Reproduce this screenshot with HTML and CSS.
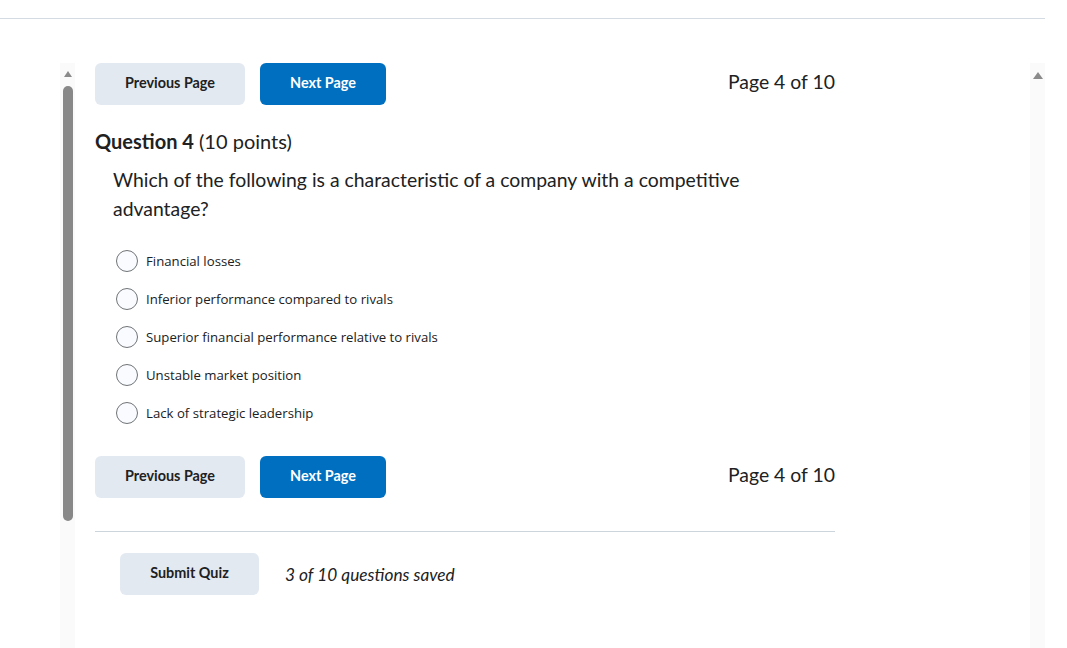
FILE: index.html
```html
<!DOCTYPE html>
<html lang="en">
<head>
    <meta charset="UTF-8">
    <title>Quiz - Page 4</title>
    <link rel="stylesheet" href="styles.css">
</head>
<body>

<div class="top-line"></div>

<div class="frame">
    <div class="scroll-track left">
        <span class="scroll-arrow"></span>
        <span class="scroll-thumb"></span>
    </div>

    <main class="quiz">
        <div class="pager">
            <button class="btn btn-light">Previous Page</button>
            <button class="btn btn-primary">Next Page</button>
            <span class="page-count">Page 4 of 10</span>
        </div>

        <h2 class="question-title"><strong>Question 4</strong> (10 points)</h2>

        <p class="question-text">Which of the following is a characteristic of a company with a competitive advantage?</p>

        <div class="options">
            <label class="option"><span class="radio"></span>Financial losses</label>
            <label class="option"><span class="radio"></span>Inferior performance compared to rivals</label>
            <label class="option"><span class="radio"></span>Superior financial performance relative to rivals</label>
            <label class="option"><span class="radio"></span>Unstable market position</label>
            <label class="option"><span class="radio"></span>Lack of strategic leadership</label>
        </div>

        <div class="pager pager-bottom">
            <button class="btn btn-light">Previous Page</button>
            <button class="btn btn-primary">Next Page</button>
            <span class="page-count">Page 4 of 10</span>
        </div>

        <hr class="divider">

        <div class="submit-row">
            <button class="btn btn-light btn-submit">Submit Quiz</button>
            <span class="saved">3 of 10 questions saved</span>
        </div>
    </main>

    <div class="scroll-track right">
        <span class="scroll-arrow"></span>
    </div>
</div>

</body>
</html>
```

FILE: styles.css
```css
body {
    margin: 0;
    padding: 0;
    background: #ffffff;
    color: #202122;
    font-family: Lato, "Open Sans", sans-serif;
    overflow: hidden;
}
.top-line {
    width: 1045px;
    height: 18px;
    border-bottom: 1px solid #d5dbe3;
}
.frame {
    display: flex;
    margin-top: 44px;
    height: 585px;
}
.scroll-track {
    width: 15px;
    background: #fafafa;
    display: flex;
    flex-direction: column;
    align-items: center;
    padding-top: 8px;
    box-sizing: border-box;
}
.scroll-track.left {
    margin-left: 60px;
}
.scroll-track.right {
    margin-left: 195px;
}
.scroll-arrow {
    width: 0;
    height: 0;
    border-left: 4px solid transparent;
    border-right: 4px solid transparent;
    border-bottom: 6px solid #8a8a8a;
}
.scroll-track.right .scroll-arrow {
    margin-top: 1px;
    border-left-width: 5px;
    border-right-width: 5px;
    border-bottom-width: 7px;
}
.scroll-thumb {
    width: 10px;
    height: 435px;
    margin-top: 9px;
    background: #888888;
    border-radius: 5px;
}
.quiz {
    width: 740px;
    margin-left: 20px;
}
.pager {
    display: flex;
    align-items: center;
    gap: 15px;
}
.btn {
    height: 42px;
    border: none;
    border-radius: 6px;
    font-family: Lato, sans-serif;
    font-size: 14.4px;
    font-weight: 700;
    cursor: pointer;
    padding: 0 0 3px;
}
.btn-light {
    width: 150px;
    background: #e3e9f1;
    color: #202122;
}
.btn-primary {
    width: 126px;
    background: #006fbf;
    color: #ffffff;
}
.page-count {
    margin-left: auto;
    padding-bottom: 5px;
    font-size: 19.4px;
}
.question-title {
    margin: 21px 0 0;
    font-size: 20px;
    line-height: 30px;
    font-weight: 400;
}
.question-title strong {
    font-weight: 700;
}
.question-text {
    margin: 9px 0 0 18px;
    width: 680px;
    font-size: 19.4px;
    line-height: 29px;
}
.options {
    margin-top: 19px;
    padding-left: 21px;
}
.option {
    display: flex;
    align-items: center;
    height: 38px;
    font-family: "Open Sans", sans-serif;
    font-size: 13.2px;
    color: #202122;
}
.radio {
    width: 20px;
    height: 20px;
    border: 1.5px solid #6f7477;
    border-radius: 50%;
    background: #f9fbff;
    margin-right: 8px;
}
.pager-bottom {
    margin-top: 24px;
}
.divider {
    border: none;
    border-top: 1px solid #cdd5dc;
    margin: 33px 0 0;
}
.submit-row {
    display: flex;
    align-items: center;
    margin-top: 21px;
    padding-left: 25px;
}
.btn-submit {
    width: 139px;
}
.saved {
    margin-left: 26px;
    font-family: Lato, sans-serif;
    font-style: italic;
    font-size: 17.3px;
}
```
